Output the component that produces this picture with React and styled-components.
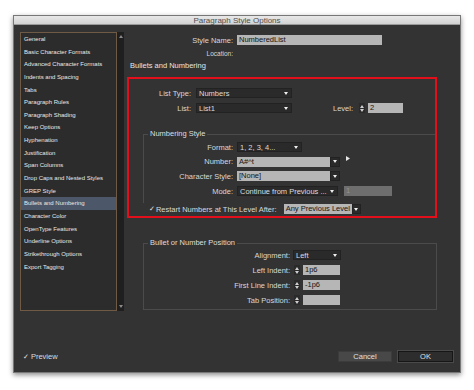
import React from 'react';
import styled, { createGlobalStyle } from 'styled-components';

const GlobalStyle = createGlobalStyle`
  html, body { margin: 0; padding: 0; background: #fff; }
  body { font-family: "Liberation Sans", Arial, sans-serif; }
  * { box-sizing: border-box; }
`;

const Page = styled.div`
  width: 474px;
  height: 390px;
  padding: 15px 13px 0;
`;

const Dialog = styled.div`
  width: 448px;
  height: 358px;
  display: flex;
  flex-direction: column;
  background: #333333;
  border: 1px solid #777;
  box-shadow: 0 2px 5px rgba(0, 0, 0, 0.45);
`;

const TitleBar = styled.div`
  height: 9px;
  line-height: 9px;
  text-align: center;
  font-size: 8px;
  color: #4e4e4e;
  background: linear-gradient(#e8e8e8, #d2d2d2);
  border-bottom: 1px solid #9a9a9a;
`;

const Main = styled.div`
  flex: 1;
  display: flex;
  padding: 7px 0 0 6px;
`;

const SideWrap = styled.div`
  display: flex;
  width: 104px;
  height: 279px;
  flex-shrink: 0;
`;

const SideList = styled.ul`
  width: 97px;
  margin: 0;
  padding: 0;
  list-style: none;
  border: 1px solid #6f5a45;
  background: #2c2c2c;
`;

const SideItem = styled.li`
  height: 12.65px;
  line-height: 12.65px;
  padding-left: 3px;
  font-size: 6px;
  color: #e8e8e8;
  white-space: nowrap;
  background: ${p => (p.$active ? '#4c5769' : 'transparent')};
`;

const ScrollBar = styled.div`
  width: 7px;
  background: #1f1f1f;
  display: flex;
  flex-direction: column;
  justify-content: space-between;
  align-items: center;
  padding: 3px 0;
`;

const Right = styled.div`
  width: 310px;
  margin-left: 3px;
  padding-top: 3px;
  display: flex;
  flex-direction: column;
`;

const Row = styled.div`
  display: flex;
  align-items: center;
  height: 10px;
  margin-top: ${p => p.$mt || 0}px;
  padding-left: ${p => p.$pl || 0}px;
`;

const Label = styled.span`
  width: ${p => p.$w}px;
  margin-right: ${p => p.$gap ?? 4}px;
  flex-shrink: 0;
  text-align: right;
  font-size: ${p => p.$size || 7.5}px;
  color: #d8d8d8;
  white-space: nowrap;
`;

const Text = styled.span`
  font-size: 7.5px;
  color: #d8d8d8;
  white-space: nowrap;
  margin-left: ${p => p.$ml || 0}px;
  margin-right: ${p => p.$mr || 0}px;
`;

const Heading = styled.div`
  height: 11px;
  line-height: 11px;
  margin-top: 2px;
  padding-left: 3px;
  font-size: 7.5px;
  color: #e6e6e6;
`;

const Field = styled.div`
  width: ${p => p.$w}px;
  height: 10px;
  line-height: 10px;
  padding-left: 2px;
  font-size: 7.5px;
  white-space: nowrap;
  overflow: hidden;
  flex-shrink: 0;
  margin-left: ${p => p.$ml || 0}px;
  background: ${p => (p.$disabled ? '#6e6e6e' : '#b6b6b6')};
  color: ${p => (p.$disabled ? '#939393' : '#151515')};
`;

const Select = styled.div`
  width: ${p => p.$w}px;
  height: 10px;
  display: flex;
  align-items: center;
  justify-content: space-between;
  padding: 0 3px 0 2px;
  flex-shrink: 0;
  background: #2a2a2a;
  border: 1px solid #222;
  font-size: 7.5px;
  color: #dcdcdc;
  white-space: nowrap;
`;

const DropButton = styled.div`
  width: ${p => p.$w || 10}px;
  height: 10px;
  display: flex;
  align-items: center;
  justify-content: center;
  flex-shrink: 0;
  background: #2a2a2a;
  border: 1px solid #222;
`;

const Spinner = styled.div`
  width: 6px;
  height: 10px;
  margin-right: 3px;
  display: flex;
  flex-direction: column;
  align-items: center;
  justify-content: center;
  gap: 1px;
  flex-shrink: 0;
  background: #2a2a2a;
`;

const RedBox = styled.div`
  margin-top: 6px;
  border: 2px solid #e3101c;
  padding: 9px 0 2px;
  display: flex;
  flex-direction: column;
`;

const Group = styled.fieldset`
  margin: ${p => p.$mt}px 0 0 ${p => p.$ml}px;
  padding: ${p => p.$pad};
  border: 1px solid #4b4b4b;
  border-right-style: ${p => (p.$open ? 'none' : 'solid')};
  border-bottom-style: ${p => (p.$open ? 'none' : 'solid')};
  min-width: 0;
  display: flex;
  flex-direction: column;
  gap: ${p => p.$gap}px;
`;

const Legend = styled.legend`
  margin-left: 4px;
  padding: 0 2px;
  height: 10px;
  line-height: 10px;
  font-size: 7.5px;
  color: #dedede;
`;

const Check = styled.span`
  font-family: "DejaVu Sans", sans-serif;
  font-size: 7px;
  color: #e6e6e6;
  margin-right: ${p => p.$mr || 1}px;
`;

const Footer = styled.div`
  height: 11px;
  margin-bottom: 10px;
  padding: 0 7px 0 9px;
  display: flex;
  align-items: center;
`;

const Preview = styled.div`
  display: flex;
  align-items: center;
  font-size: 7.5px;
  color: #dcdcdc;
`;

const Buttons = styled.div`
  margin-left: auto;
  display: flex;
  gap: 6px;
`;

const Button = styled.div`
  width: ${p => p.$w}px;
  height: 11px;
  line-height: 9px;
  text-align: center;
  font-size: 7.5px;
  color: #e0e0e0;
  background: ${p => (p.$primary ? '#2d2d2d' : '#484848')};
  border: 1px solid ${p => (p.$primary ? '#161616' : '#3c3c3c')};
  box-shadow: ${p => (p.$primary ? '0 0 0 1px #4a4a4a' : 'none')};
`;

const Down = ({ color = '#eee' }) => (
  <svg width="4" height="3" viewBox="0 0 4 3"><polygon points="0,0 4,0 2,3" fill={color} /></svg>
);
const Up = ({ color = '#eee' }) => (
  <svg width="4" height="3" viewBox="0 0 4 3"><polygon points="0,3 4,3 2,0" fill={color} /></svg>
);

const Spin = () => (
  <Spinner>
    <Up color="#cfcfcf" />
    <Down color="#cfcfcf" />
  </Spinner>
);

const Flyout = () => (
  <svg width="4" height="5" viewBox="0 0 4 5" style={{ marginLeft: 6, marginTop: -6 }}>
    <polygon points="0,0 4,2.5 0,5" fill="#e6e6e6" />
  </svg>
);

const sections = [
  'General', 'Basic Character Formats', 'Advanced Character Formats', 'Indents and Spacing',
  'Tabs', 'Paragraph Rules', 'Paragraph Shading', 'Keep Options', 'Hyphenation',
  'Justification', 'Span Columns', 'Drop Caps and Nested Styles', 'GREP Style',
  'Bullets and Numbering', 'Character Color', 'OpenType Features', 'Underline Options',
  'Strikethrough Options', 'Export Tagging',
];

export default function App() {
  return (
    <Page>
      <GlobalStyle />
      <Dialog>
        <TitleBar>Paragraph Style Options</TitleBar>
        <Main>
          <SideWrap>
            <SideList>
              {sections.map(s => (
                <SideItem key={s} $active={s === 'Bullets and Numbering'}>{s}</SideItem>
              ))}
            </SideList>
            <ScrollBar>
              <Up color="#8a8a8a" />
              <Down color="#8a8a8a" />
            </ScrollBar>
          </SideWrap>

          <Right>
            <Row>
              <Label $w={106}>Style Name:</Label>
              <Field $w={145}>NumberedList</Field>
            </Row>
            <Row $mt={3}>
              <Label $w={106} $size={6.5}>Location:</Label>
            </Row>
            <Heading>Bullets and Numbering</Heading>

            <RedBox>
              <Row>
                <Label $w={62} $gap={5}>List Type:</Label>
                <Select $w={96}>Numbers<Down /></Select>
              </Row>
              <Row $mt={5}>
                <Label $w={62} $gap={5}>List:</Label>
                <Select $w={96}>List1<Down /></Select>
                <Text $ml={41} $mr={6}>Level:</Text>
                <Spin />
                <Field $w={35}>2</Field>
              </Row>

              <Group $mt={16} $ml={14} $pad="3px 0 7px 0" $gap={4.7} $open>
                <Legend>Numbering Style</Legend>
                <Row>
                  <Label $w={89}>Format:</Label>
                  <Select $w={65}>1, 2, 3, 4...<Down /></Select>
                </Row>
                <Row>
                  <Label $w={89}>Number:</Label>
                  <Field $w={93}>A#^t</Field>
                  <DropButton><Down /></DropButton>
                  <Flyout />
                </Row>
                <Row>
                  <Label $w={89}>Character Style:</Label>
                  <Field $w={93}>[None]</Field>
                  <DropButton><Down /></DropButton>
                </Row>
                <Row>
                  <Label $w={89}>Mode:</Label>
                  <Select $w={101}>Continue from Previous ...<Down /></Select>
                  <Field $w={48} $ml={6} $disabled>1</Field>
                </Row>
              </Group>

              <Row $mt={1} $pl={20}>
                <Check>✓</Check>
                <Text $mr={7}>Restart Numbers at This Level After:</Text>
                <Field $w={68}>Any Previous Level</Field>
                <DropButton $w={9}><Down /></DropButton>
              </Row>
            </RedBox>

            <Group $mt={20} $ml={16} $pad="2px 0 4px 0" $gap={5}>
              <Legend>Bullet or Number Position</Legend>
              <Row>
                <Label $w={146} $gap={3}>Alignment:</Label>
                <Select $w={48}>Left<Down /></Select>
              </Row>
              <Row>
                <Label $w={146}>Left Indent:</Label>
                <Spin />
                <Field $w={37}>1p6</Field>
              </Row>
              <Row>
                <Label $w={146}>First Line Indent:</Label>
                <Spin />
                <Field $w={37}>-1p6</Field>
              </Row>
              <Row>
                <Label $w={146}>Tab Position:</Label>
                <Spin />
                <Field $w={37}></Field>
              </Row>
            </Group>
          </Right>
        </Main>

        <Footer>
          <Preview>
            <Check $mr={2}>✓</Check>
            Preview
          </Preview>
          <Buttons>
            <Button $w={54}>Cancel</Button>
            <Button $w={55} $primary>OK</Button>
          </Buttons>
        </Footer>
      </Dialog>
    </Page>
  );
}
